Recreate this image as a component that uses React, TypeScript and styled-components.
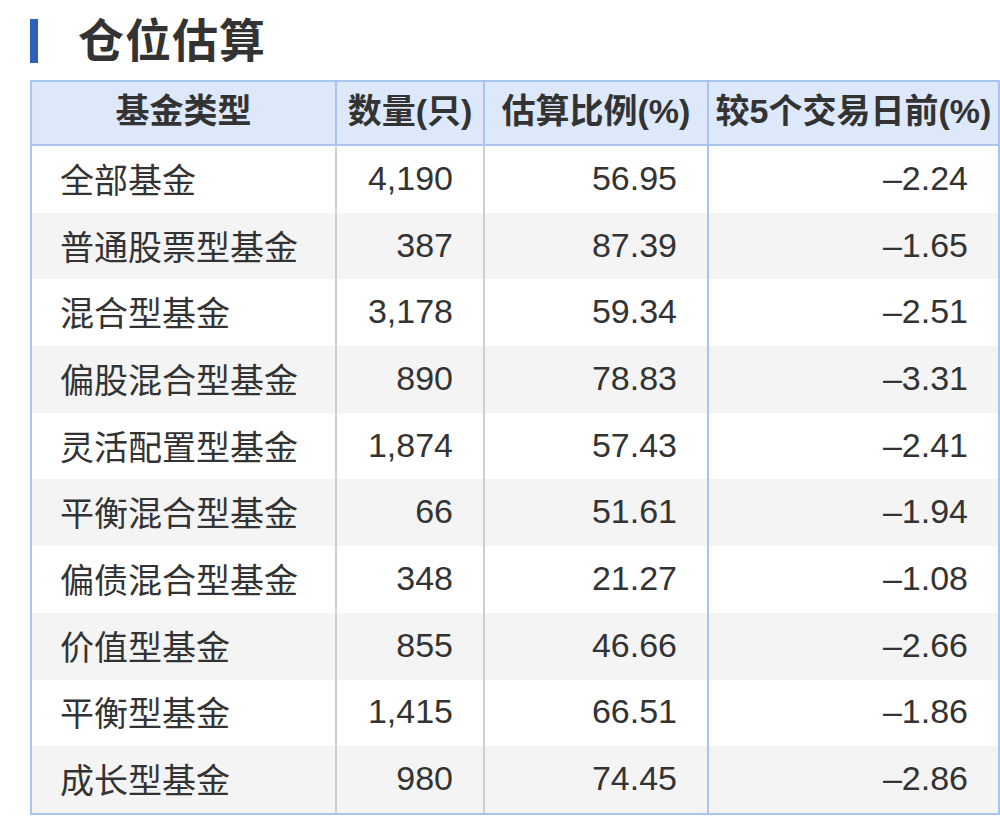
import { createGlobalStyle, styled } from "styled-components";

interface FundRow {
  name: string;
  count: string;
  ratio: string;
  change: string;
}

const rows: FundRow[] = [
  { name: "全部基金", count: "4,190", ratio: "56.95", change: "–2.24" },
  { name: "普通股票型基金", count: "387", ratio: "87.39", change: "–1.65" },
  { name: "混合型基金", count: "3,178", ratio: "59.34", change: "–2.51" },
  { name: "偏股混合型基金", count: "890", ratio: "78.83", change: "–3.31" },
  { name: "灵活配置型基金", count: "1,874", ratio: "57.43", change: "–2.41" },
  { name: "平衡混合型基金", count: "66", ratio: "51.61", change: "–1.94" },
  { name: "偏债混合型基金", count: "348", ratio: "21.27", change: "–1.08" },
  { name: "价值型基金", count: "855", ratio: "46.66", change: "–2.66" },
  { name: "平衡型基金", count: "1,415", ratio: "66.51", change: "–1.86" },
  { name: "成长型基金", count: "980", ratio: "74.45", change: "–2.86" },
];

const GlobalStyle = createGlobalStyle`
  body {
    margin: 0;
    background: #fff;
    font-family: "Liberation Sans", "Noto Sans CJK SC", sans-serif;
    color: #333;
  }
`;

const Page = styled.div`
  width: 1000px;
  height: 832px;
  padding: 13px 0 0 30px;
  box-sizing: border-box;
  overflow: hidden;
`;

const TitleRow = styled.div`
  display: flex;
  align-items: center;
  gap: 40px;
  height: 52px;
  margin-bottom: 15px;
`;

const TitleBar = styled.div`
  width: 8px;
  height: 44px;
  margin-top: 4px;
  background: #2d62b8;
`;

const Title = styled.h1`
  margin: 0 0 4px;
  font-size: 46px;
  font-weight: bold;
  color: #333;
  letter-spacing: 1px;
`;

const Table = styled.div`
  width: 970px;
  display: grid;
  grid-template-columns: 305px 148px 224px 1fr;
  border: 2px solid #a9c4ef;
  box-sizing: border-box;
`;

const HeadCell = styled.div<{ $last?: boolean }>`
  height: 64px;
  display: flex;
  align-items: center;
  justify-content: center;
  padding-bottom: 10px;
  box-sizing: border-box;
  background: #dde8fa;
  border-right: ${(p) => (p.$last ? "none" : "2px solid #a9c4ef")};
  border-bottom: 2px solid #a9c4ef;
  font-size: 34px;
  font-weight: bold;
  color: #333;
  white-space: nowrap;
`;

const Cell = styled.div<{ $shade: boolean; $num?: boolean; $line?: "gray" | "blue" | "none" }>`
  height: 66.7px;
  display: flex;
  align-items: center;
  justify-content: ${(p) => (p.$num ? "flex-end" : "flex-start")};
  padding: ${(p) => (p.$num ? "0 30px 2px 0" : "0 0 2px 28px")};
  background: ${(p) => (p.$shade ? "#f4f4f4" : "#fff")};
  border-right: ${(p) =>
    p.$line === "gray" ? "2px solid #cfcfcf" : p.$line === "blue" ? "2px solid #a9c4ef" : "none"};
  font-size: 34px;
  color: #333;
  white-space: nowrap;
  box-sizing: border-box;
`;

export default function App() {
  return (
    <>
      <GlobalStyle />
      <Page>
        <TitleRow>
          <TitleBar />
          <Title>仓位估算</Title>
        </TitleRow>
        <Table>
          <HeadCell>基金类型</HeadCell>
          <HeadCell>数量(只)</HeadCell>
          <HeadCell>估算比例(%)</HeadCell>
          <HeadCell $last>较5个交易日前(%)</HeadCell>
          {rows.map((r, i) => {
            const shade = i % 2 === 1;
            return [
              <Cell key={r.name + "n"} $shade={shade} $line="gray">
                {r.name}
              </Cell>,
              <Cell key={r.name + "c"} $shade={shade} $num $line="gray">
                {r.count}
              </Cell>,
              <Cell key={r.name + "r"} $shade={shade} $num $line="blue">
                {r.ratio}
              </Cell>,
              <Cell key={r.name + "d"} $shade={shade} $num $line="none">
                {r.change}
              </Cell>,
            ];
          })}
        </Table>
      </Page>
    </>
  );
}
